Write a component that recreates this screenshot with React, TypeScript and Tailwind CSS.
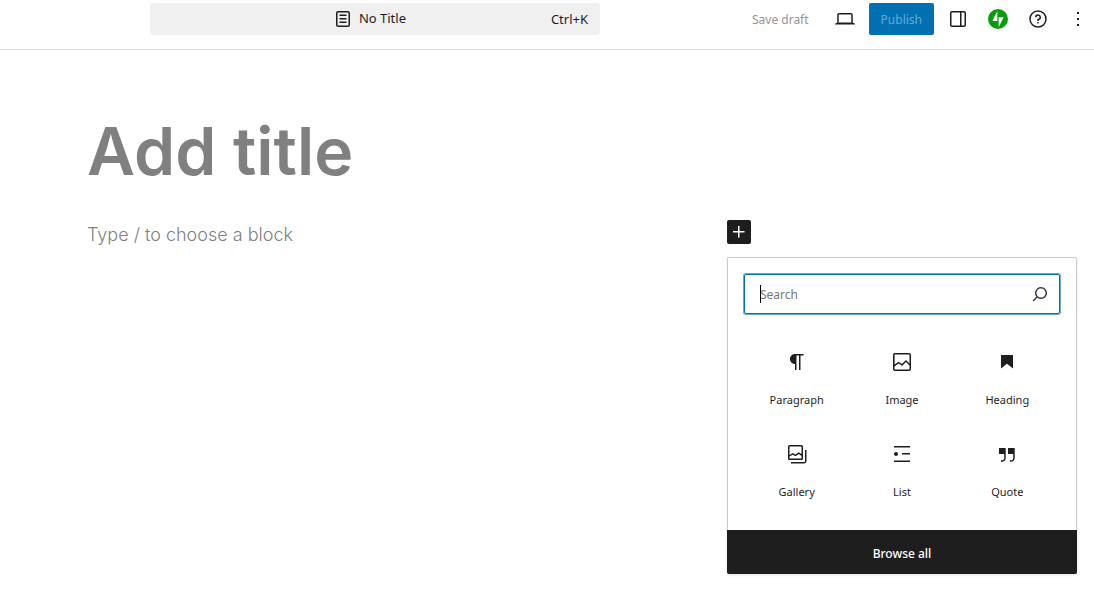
import React, { useState } from 'react';

const ICONS = {
  page: 'M15.5 7.5h-7V9h7V7.5Zm-7 3.5h7v1.5h-7V11Zm7 3.5h-7V16h7v-1.5ZM17 4H7a2 2 0 0 0-2 2v12a2 2 0 0 0 2 2h10a2 2 0 0 0 2-2V6a2 2 0 0 0-2-2ZM7 5.5h10a.5.5 0 0 1 .5.5v12a.5.5 0 0 1-.5.5H7a.5.5 0 0 1-.5-.5V6a.5.5 0 0 1 .5-.5Z',
  desktop: 'M20.5 16h-.7V8c0-1.1-.9-2-2-2H6.2c-1.1 0-2 .9-2 2v8h-.7c-.8 0-1.5.7-1.5 1.5h20c0-.8-.7-1.5-1.5-1.5zM5.7 8c0-.3.2-.5.5-.5h11.6c.3 0 .5.2.5.5v7.6H5.7V8z',
  sidebar: 'M18 4H6c-1.1 0-2 .9-2 2v12c0 1.1.9 2 2 2h12c1.1 0 2-.9 2-2V6c0-1.1-.9-2-2-2zm-4 14.5H6c-.3 0-.5-.2-.5-.5V6c0-.3.2-.5.5-.5h8v13zm4.5-.5c0 .3-.2.5-.5.5h-2.5v-13H18c.3 0 .5.2.5.5v12z',
  help: 'M12 4.75a7.25 7.25 0 100 14.5 7.25 7.25 0 000-14.5zM3.25 12a8.75 8.75 0 1117.5 0 8.75 8.75 0 01-17.5 0zM12 8.75a1.5 1.5 0 01.167 2.99c-.465.052-.917.44-.917 1.01V14h1.5v-.845A3 3 0 109 10.25h1.5a1.5 1.5 0 011.5-1.5zM11.25 15v1.5h1.5V15h-1.5z',
  more: 'M13 19h-2v-2h2v2zm0-6h-2v-2h2v2zm0-6h-2V5h2v2z',
  plus: 'M11 12.5V17.5H12.5V12.5H17.5V11H12.5V6H11V11H6V12.5H11Z',
  search: 'M13 5c-3.3 0-6 2.7-6 6 0 1.4.5 2.7 1.3 3.7l-3.8 3.8 1.1 1.1 3.8-3.8c1 .8 2.3 1.3 3.7 1.3 3.3 0 6-2.7 6-6S16.3 5 13 5zm0 10.5c-2.5 0-4.5-2-4.5-4.5s2-4.5 4.5-4.5 4.5 2 4.5 4.5-2 4.5-4.5 4.5z',
  paragraph: 'm9.99609 14v-.2251l.00391.0001v6.225h1.5v-14.5h2.5v14.5h1.5v-14.5h3v-1.5h-8.50391c-2.76142 0-5 2.23858-5 5 0 2.7614 2.23858 5 5 5z',
  image: 'M19 3H5c-1.1 0-2 .9-2 2v14c0 1.1.9 2 2 2h14c1.1 0 2-.9 2-2V5c0-1.1-.9-2-2-2zM5 4.5h14c.3 0 .5.2.5.5v8.4l-3-2.9c-.3-.3-.8-.3-1 0L11.9 14 9 12c-.3-.2-.6-.2-.8 0l-3.6 2.6V5c-.1-.3.1-.5.4-.5zm14 15H5c-.3 0-.5-.2-.5-.5v-2.4l4.1-3 3 1.9c.3.2.7.2.9-.1L16 12l3.5 3.4V19c0 .3-.2.5-.5.5z',
  heading: 'M6 5V18.5911L12 13.8473L18 18.5911V5H6Z',
  gallery: 'M16.375 4.5H4.625a.125.125 0 0 0-.125.125v8.254l2.859-1.54a.75.75 0 0 1 .68-.016l2.384 1.142 2.89-2.074a.75.75 0 0 1 .874 0l2.313 1.66V4.625a.125.125 0 0 0-.125-.125Zm.125 9.398-2.75-1.975-2.813 2.02a.75.75 0 0 1-.76.067l-2.444-1.17L4.5 14.583v1.792c0 .069.056.125.125.125h11.75a.125.125 0 0 0 .125-.125v-2.477ZM4.625 3C3.728 3 3 3.728 3 4.625v11.75C3 17.273 3.728 18 4.625 18h11.75c.898 0 1.625-.727 1.625-1.625V4.625C18 3.728 17.273 3 16.375 3H4.625ZM20 8v11c0 .69-.31 1-.999 1H6v1.5h13.001c1.52 0 2.499-.982 2.499-2.5V8H20Z',
  list: 'M4 4v1.5h16V4H4zm8 8.5h8V11h-8v1.5zM4 20h16v-1.5H4V20zm4-8c0-1.1-.9-2-2-2s-2 .9-2 2 .9 2 2 2 2-.9 2-2z',
  quote: 'M13 6v6h5.2v4c0 .8-.2 1.4-.5 1.7-.6.6-1.6.6-2.5.5h-.3v1.5h.5c1 0 2.3-.1 3.3-1 .6-.6 1-1.6 1-2.8V6H13zm-9 6h5.2v4c0 .8-.2 1.4-.5 1.7-.6.6-1.6.6-2.5.5h-.3v1.5h.5c1 0 2.3-.1 3.3-1 .6-.6 1-1.6 1-2.8V6H4v6z',
};

type IconName = keyof typeof ICONS;

const BLOCKS: { name: string; icon: IconName }[] = [
  { name: 'Paragraph', icon: 'paragraph' },
  { name: 'Image', icon: 'image' },
  { name: 'Heading', icon: 'heading' },
  { name: 'Gallery', icon: 'gallery' },
  { name: 'List', icon: 'list' },
  { name: 'Quote', icon: 'quote' },
];

const Icon: React.FC<{ name: IconName }> = ({ name }) => (
  <svg viewBox="0 0 24 24" className="size-6 shrink-0" fill="currentColor" fillRule="evenodd" aria-hidden="true">
    <path d={ICONS[name]} />
  </svg>
);

const JetpackLogo: React.FC = () => (
  <svg viewBox="0 0 32 32" className="size-5" aria-hidden="true">
    <circle cx="16" cy="16" r="16" fill="#069e08" />
    <path d="M15 19H7l8-16v16zM17 29V13h8l-8 16z" fill="#fff" />
  </svg>
);

const IconButton: React.FC<{ label: string; children: React.ReactNode }> = ({ label, children }) => (
  <button type="button" aria-label={label} className="flex size-8 items-center justify-center">
    {children}
  </button>
);

const EditorHeader: React.FC = () => (
  <header className="flex items-start border-b border-[#ddd] pt-[3px] pb-3.5 pl-[150px]">
    <button
      type="button"
      className="flex h-8 w-[450px] items-center rounded bg-[#f0f0f0] pr-3 pl-9 text-[13px]"
    >
      <span className="flex flex-1 items-center justify-center gap-1">
        <Icon name="page" />
        <span>No Title</span>
      </span>
      <span className="pt-0.5">Ctrl+K</span>
    </button>

    <div className="ml-auto flex items-center gap-2">
      <button type="button" disabled className="h-8 px-3 pt-0.5 text-[#949494]">
        Save draft
      </button>
      <IconButton label="View">
        <Icon name="desktop" />
      </IconButton>
      <button type="button" disabled className="h-8 rounded-xs bg-[#0170b3] px-3 pt-0.5 text-[#66a9d1]">
        Publish
      </button>
      <IconButton label="Settings">
        <Icon name="sidebar" />
      </IconButton>
      <IconButton label="Jetpack">
        <JetpackLogo />
      </IconButton>
      <IconButton label="Help">
        <Icon name="help" />
      </IconButton>
      <IconButton label="Options">
        <Icon name="more" />
      </IconButton>
    </div>
  </header>
);

const QuickInserter: React.FC = () => {
  const [search, setSearch] = useState<string>('');

  return (
    <div className="rounded-xs border border-[#ccc] bg-white shadow-sm">
      <div className="p-4">
        <label className="relative flex h-10 items-center rounded-xs border border-[#0170b3] pr-[7px] pl-[15px] ring-1 ring-[#0170b3]/60">
          {/* Caret shown while the field is empty */}
          {search === '' && (
            <span className="absolute left-[15px] h-[18px] w-px bg-black" aria-hidden="true" />
          )}
          <input
            type="text"
            autoFocus
            aria-label="Search"
            placeholder="Search"
            value={search}
            onChange={(e) => setSearch(e.target.value)}
            className="min-w-0 flex-1 pt-0.5 outline-none placeholder:text-[#757575]"
          />
          <span className="text-[#3c434a]">
            <Icon name="search" />
          </span>
        </label>
      </div>

      <div className="grid grid-cols-3 px-4 pb-4">
        {BLOCKS.map((block) => (
          <button
            key={block.name}
            type="button"
            className="flex h-[92px] flex-col items-center gap-4 pt-5 text-[11px] leading-5"
          >
            <Icon name={block.icon} />
            <span>{block.name}</span>
          </button>
        ))}
      </div>

      <button
        type="button"
        className="-mx-px -mb-px flex h-11 w-[350px] items-center justify-center rounded-b-xs bg-[#1e1e1e] pt-1 font-medium text-white"
      >
        Browse all
      </button>
    </div>
  );
};

export default function App() {
  return (
    <div className="min-h-screen bg-white font-['Noto_Sans',sans-serif] text-[12px] text-[#1e1e1e]">
      <EditorHeader />

      <main className="pt-16 pr-[17px] pl-[87px]">
        <h1 className="font-['Inter',sans-serif] text-[66px] leading-[74px] font-semibold text-[#808080]">
          Add title
        </h1>

        <div className="mt-8 flex items-start justify-between">
          <p className="font-['Inter',sans-serif] text-[18px] leading-[30px] font-light text-[#808080]">
            Type / to choose a block
          </p>

          <div className="flex w-[350px] flex-col gap-[13px]">
            <button
              type="button"
              aria-label="Add block"
              className="flex size-6 items-center justify-center rounded-xs bg-[#1e1e1e] text-white"
            >
              <Icon name="plus" />
            </button>
            <QuickInserter />
          </div>
        </div>
      </main>
    </div>
  );
}
